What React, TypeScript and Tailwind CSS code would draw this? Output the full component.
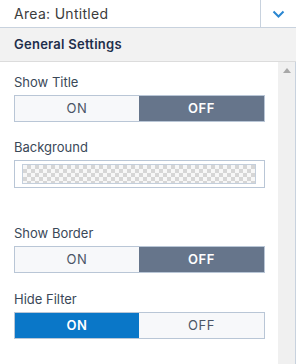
import React from "react";

type ToggleProps = { value: boolean };

function Toggle({ value }: ToggleProps) {
  // active side gets the colour, the other stays pale
  const on = value
    ? "bg-[#0a77c8] text-white font-semibold"
    : "bg-[#f7f8fa] text-[#4a5566]";
  const off = value
    ? "bg-[#f7f8fa] text-[#4a5566]"
    : "bg-[#66758b] text-white font-semibold";
  return (
    <div className="flex w-[251px] h-[27px] border border-[#b9c6d6]">
      <div className={`w-[124px] flex items-center justify-center text-[13px] tracking-[0.6px] ${on}`}>ON</div>
      <div className={`flex-1 flex items-center justify-center text-[13px] tracking-[0.6px] ${off}`}>OFF</div>
    </div>
  );
}

function Label({ children }: { children: React.ReactNode }) {
  return <div className="text-[13px] leading-[16px] text-[#3a4858] mb-[5px]">{children}</div>;
}

export default function App() {
  return (
    <div className="w-[296px] h-[364px] bg-white overflow-hidden font-['Inter',sans-serif]">
      {/* area select */}
      <div className="flex h-[28px] border-b border-[#c8d2de]">
        <div className="flex-1 flex items-center pl-[14px] text-[14px] tracking-[0.3px] text-[#3c3c3c] border-r border-[#c8d2de]">
          Area: Untitled
        </div>
        <div className="w-[35px] flex items-center justify-center">
          <svg width="13" height="8" viewBox="0 0 13 8">
            <polyline points="1.5,1.5 6.5,6.5 11.5,1.5" fill="none" stroke="#2a86d1" strokeWidth="2" />
          </svg>
        </div>
      </div>

      <div className="h-[34px] bg-[#f2f2f2] border-b border-[#dcdcdc] flex items-center pl-[14px] text-[13px] tracking-[0.25px] font-semibold text-[#1e2e4b]">
        General Settings
      </div>

      <div className="flex h-[302px]">
        <div className="flex-1 pl-[14px] pt-[12px]">
          <Label>Show Title</Label>
          <Toggle value={false} />

          <div className="mt-[17px]">
            <Label>Background</Label>
            <div className="w-[251px] h-[28px] border border-[#b9c6d6] p-[3px] pl-[7px] pr-[8px]">
              <div className="h-full border border-[#c4cfdc] bg-[repeating-conic-gradient(#d6d6d6_0_25%,#f7f7f7_0_50%)] bg-[length:8px_8px]" />
            </div>
          </div>

          <div className="mt-[37px]">
            <Label>Show Border</Label>
            <Toggle value={false} />
          </div>

          <div className="mt-[18px]">
            <Label>Hide Filter</Label>
            <Toggle value={true} />
          </div>
        </div>

        {/* scrollbar */}
        <div className="w-[18px] bg-[#f0f0f0] border-r border-[#c8d2de] flex justify-center pt-[6px]">
          <svg width="8" height="5" viewBox="0 0 8 5">
            <polygon points="4,0 8,5 0,5" fill="#a8a8a8" />
          </svg>
        </div>
      </div>
    </div>
  );
}
